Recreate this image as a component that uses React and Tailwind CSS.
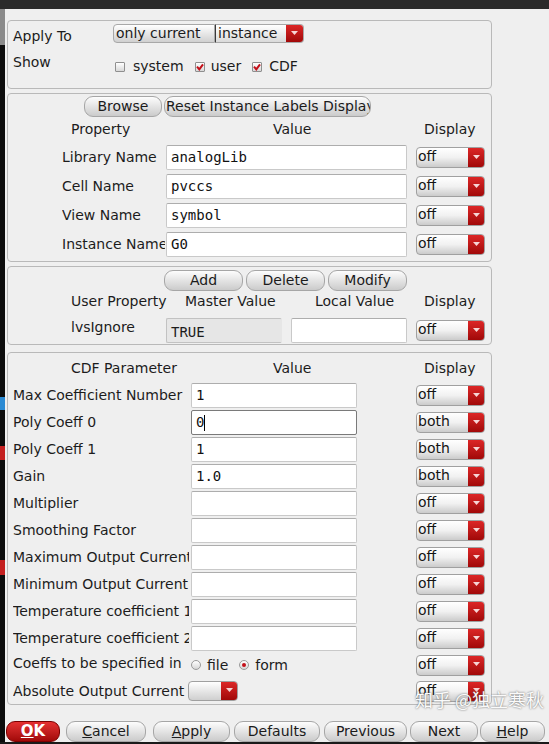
import React from 'react';

const Arrow = ({ w = 'w-[16px]', round = '' }) => (
  <span className={`${w} ${round} h-full flex items-center justify-center bg-linear-to-b from-[#dc2626] to-[#a10808]`}>
    <svg width="7" height="4" viewBox="0 0 7 4" className="-mt-[2px]">
      <path d="M0 0H7L3.5 4Z" fill="#f6d6d6" />
    </svg>
  </span>
);

const Sel = ({ v = 'off' }) => (
  <div className="w-[69px] h-[21px] flex rounded-[4px] border border-[#a0a0a0] overflow-hidden bg-linear-to-b from-white via-[#f1f1f1] to-[#cbcbcb]">
    <span className="flex-1 pl-[1px] text-[14px] leading-[16px] text-[#141414]">{v}</span>
    <Arrow />
  </div>
);

const Field = ({ w, v, focus }) => (
  <div
    className={`${w} h-[25px] bg-white border rounded-[2px] flex items-center pl-[4px] font-['DejaVu_Sans_Mono',monospace] text-[14px] text-[#111] ${
      focus ? 'border-[#7a7a7a]' : 'border-[#c9c9c9] border-t-[#adadad]'
    }`}
  >
    {v}
    {focus && <span className="w-[1px] h-[16px] bg-black" />}
  </div>
);

const Btn = ({ cls, children }) => (
  <div className={`h-[21px] rounded-[9px] border border-[#a6a6a6] bg-linear-to-b from-[#fdfdfd] to-[#cbcbcb] flex items-center text-[14px] text-[#1b1b1b] whitespace-nowrap overflow-hidden ${cls}`}>
    {children}
  </div>
);

const Check = ({ on }) => (
  <span className="w-[10px] h-[10px] border border-[#8f8f8f] rounded-[1px] bg-linear-to-b from-white to-[#d8d8d8] flex items-center justify-center">
    {on && (
      <svg width="8" height="8" viewBox="0 0 8 8">
        <path d="M1 3.6L3.3 6.3L7 1.3" stroke="#c3101a" strokeWidth="2" fill="none" />
      </svg>
    )}
  </span>
);

const Radio = ({ on }) => (
  <span className="w-[10px] h-[10px] rounded-full border border-[#9a9a9a] bg-linear-to-b from-white to-[#d6d6d6] flex items-center justify-center">
    {on && <span className="w-[4px] h-[4px] rounded-full bg-[#c3101a]" />}
  </span>
);

const props = [
  ['Library Name', 'analogLib'],
  ['Cell Name', 'pvccs'],
  ['View Name', 'symbol'],
  ['Instance Name', 'G0'],
];

const cdf = [
  ['Max Coefficient Number', '1', 'off'],
  ['Poly Coeff 0', '0', 'both', true],
  ['Poly Coeff 1', '1', 'both'],
  ['Gain', '1.0', 'both'],
  ['Multiplier', '', 'off'],
  ['Smoothing Factor', '', 'off'],
  ['Maximum Output Current', '', 'off'],
  ['Minimum Output Current', '', 'off'],
  ['Temperature coefficient 1', '', 'off'],
  ['Temperature coefficient 2', '', 'off'],
];

export default function App() {
  return (
    <div className="relative w-[549px] h-[744px] overflow-hidden bg-[#efefef] flex flex-col font-['DejaVu_Sans','Liberation_Sans',sans-serif] text-[14px] text-[#1c1c1c]">
      <div className="h-[9px] bg-[#2b2b2b]" />

      <div className="flex flex-1">
        {/* left edge of the window behind */}
        <div className="w-[5px] bg-[#0c0c0c] flex flex-col">
          <div className="h-[36px] bg-[#8a8a8a]" />
          <div className="h-[352px]" />
          <div className="h-[13px] bg-[#2b8ad3]" />
          <div className="h-[36px]" />
          <div className="h-[14px] bg-[#c42020]" />
          <div className="h-[100px]" />
          <div className="h-[15px] bg-[#c42020]" />
        </div>

        <div className="flex-1 pt-[11px]">
          {/* Apply To / Show */}
          <div className="ml-[2px] w-[485px] h-[69px] border border-[#b9b9b9] rounded-[4px]">
            <div className="flex items-start pt-[3px]">
              <span className="ml-[5px] w-[100px] mt-[4px] leading-[17px]">Apply To</span>
              <div className="flex h-[19px]">
                <div className="w-[102px] h-full rounded-l-[4px] border border-[#a8a8a8] bg-linear-to-b from-white to-[#d0d0d0] pl-[2px] leading-[16px]">
                  only current
                </div>
                <div className="w-[89px] h-full flex rounded-r-[4px] border border-[#a8a8a8] border-l-[#3a3a3a] overflow-hidden bg-linear-to-b from-white to-[#dadada]">
                  <span className="flex-1 pl-[2px] leading-[16px]">instance</span>
                  <Arrow w="w-[17px]" />
                </div>
              </div>
            </div>
            <div className="flex items-start">
              <span className="ml-[5px] w-[100px] mt-[9px] leading-[17px]">Show</span>
              <div className="flex items-center mt-[13px] ml-[2px] h-[17px]">
                <Check />
                <span className="ml-[8px]">system</span>
                <span className="ml-[11px]"><Check on /></span>
                <span className="ml-[6px]">user</span>
                <span className="ml-[11px]"><Check on /></span>
                <span className="ml-[7px]">CDF</span>
              </div>
            </div>
          </div>

          {/* Property */}
          <div className="ml-[2px] mt-[4px] w-[485px] h-[169px] border border-[#b9b9b9] rounded-[4px]">
            <div className="flex pt-[2px] pl-[76px]">
              <Btn cls="w-[78px] justify-center">Browse</Btn>
              <Btn cls="w-[207px] ml-[2px] pl-[1px]">Reset Instance Labels Display</Btn>
            </div>
            <div className="flex items-center h-[24px]">
              <span className="ml-[63px] w-[202px]">Property</span>
              <span className="w-[151px]">Value</span>
              <span>Display</span>
            </div>
            {props.map(([l, v]) => (
              <div key={l} className="flex items-center h-[25px] mt-[4px]">
                <span className="ml-[54px] w-[103px] overflow-hidden whitespace-nowrap">{l}</span>
                <div className="ml-[1px]"><Field w="w-[241px]" v={v} /></div>
                <div className="ml-[9px]"><Sel /></div>
              </div>
            ))}
          </div>

          {/* User property */}
          <div className="ml-[2px] mt-[4px] w-[485px] h-[79px] border border-[#b9b9b9] rounded-[4px]">
            <div className="flex pt-[3px] pl-[156px]">
              <Btn cls="w-[79px] h-[20px] justify-center">Add</Btn>
              <Btn cls="w-[79px] h-[20px] ml-[3px] justify-center">Delete</Btn>
              <Btn cls="w-[79px] h-[20px] ml-[3px] justify-center">Modify</Btn>
            </div>
            <div className="flex items-center h-[21px]">
              <span className="ml-[63px] w-[114px]">User Property</span>
              <span className="w-[130px]">Master Value</span>
              <span className="w-[109px]">Local Value</span>
              <span>Display</span>
            </div>
            <div className="flex items-start mt-[6px]">
              <span className="ml-[63px] w-[95px] leading-[17px] mt-[1px]">lvsIgnore</span>
              <div className="w-[116px] h-[25px] bg-[#e6e6e6] border border-[#c2c2c2] border-r-[#e6e6e6] rounded-[2px] flex items-center pl-[4px] pt-[3px] font-['DejaVu_Sans_Mono',monospace] text-[14px]">
                TRUE
              </div>
              <div className="ml-[9px]"><Field w="w-[116px]" v="" /></div>
              <div className="ml-[9px] mt-[2px]"><Sel /></div>
            </div>
          </div>

          {/* CDF */}
          <div className="ml-[2px] mt-[7px] w-[485px] h-[353px] border border-[#b9b9b9] rounded-[4px] overflow-hidden">
            <div className="flex items-center h-[30px]">
              <span className="ml-[63px] w-[202px]">CDF Parameter</span>
              <span className="w-[151px]">Value</span>
              <span>Display</span>
            </div>
            {cdf.map(([l, v, d, f]) => (
              <div key={l} className="flex items-center h-[25px] mb-[2px]">
                <span className="ml-[5px] w-[176px] overflow-hidden whitespace-nowrap">{l}</span>
                <div className="ml-[2px]"><Field w="w-[166px]" v={v} focus={f} /></div>
                <div className="ml-[59px]"><Sel v={d} /></div>
              </div>
            ))}
            <div className="flex items-center h-[24px] mb-[2px]">
              <span className="ml-[5px] w-[178px] overflow-hidden whitespace-nowrap -mt-[3px]">Coeffs to be specified in</span>
              <div className="w-[166px] flex items-center">
                <Radio />
                <span className="ml-[6px]">file</span>
                <span className="ml-[11px]"><Radio on /></span>
                <span className="ml-[6px]">form</span>
              </div>
              <div className="ml-[59px]"><Sel /></div>
            </div>
            <div className="flex items-center h-[24px]">
              <span className="ml-[5px] w-[175px] overflow-hidden whitespace-nowrap">Absolute Output Current</span>
              <div className="w-[50px] h-[20px] flex rounded-[4px] border border-[#a0a0a0] overflow-hidden bg-linear-to-b from-white to-[#cfcfcf]">
                <span className="flex-1" />
                <Arrow />
              </div>
              <div className="ml-[178px]"><Sel /></div>
            </div>
          </div>

          {/* bottom buttons */}
          <div className="flex mt-[16px]">
            <div className="ml-[1px] w-[54px] h-[21px] rounded-[9px] border border-[#7c0000] bg-linear-to-b from-[#e53131] to-[#a20808] flex items-center justify-center text-white font-bold text-[15px]">
              <span><span className="underline">O</span>K</span>
            </div>
            <Btn cls="ml-[6px] w-[80px] justify-center"><span><span className="underline">C</span>ancel</span></Btn>
            <Btn cls="ml-[7px] w-[77px] justify-center"><span><span className="underline">A</span>pply</span></Btn>
            <Btn cls="ml-[4px] w-[86px] justify-center">Defaults</Btn>
            <Btn cls="ml-[4px] w-[83px] justify-center">Previous</Btn>
            <Btn cls="ml-[3px] w-[68px] justify-center">Next</Btn>
            <Btn cls="ml-[2px] w-[65px] justify-center"><span><span className="underline">H</span>elp</span></Btn>
          </div>
        </div>
      </div>

      <div className="h-[2px] bg-[#1a1a1a]" />

      <div className="absolute left-[415px] top-[687px] text-[18px] leading-[24px] text-[#fafafa] [text-shadow:0_0_2px_#555] font-['Noto_Sans_CJK_SC',sans-serif] whitespace-nowrap">
        知乎 @独立寒秋
      </div>
    </div>
  );
}
